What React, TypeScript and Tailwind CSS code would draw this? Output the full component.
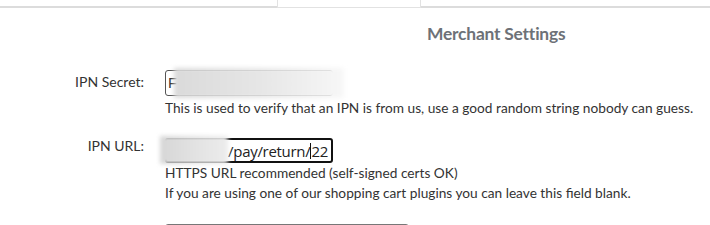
import React from "react";

export default function App() {
  return (
    <div className="w-[710px] h-[225px] overflow-hidden bg-white text-[#333] [font-family:Lato,'Noto_Sans',sans-serif]">
      <div className="flex h-[8px]">
        <div className="w-[277px] border-b-2 border-[#dcdcdc]" />
        <div className="w-[144px] border-l border-r border-b border-[#e2e2e2]" />
        <div className="flex-1 border-b-2 border-[#dcdcdc]" />
      </div>
      <div className="pl-[427px] pt-[16px] h-[62px]">
        <h2 className="text-[17.4px] font-bold text-[#6d7177] leading-[20px] tracking-[-0.2px]">Merchant Settings</h2>
      </div>
      <div className="grid grid-cols-[145px_1fr] gap-x-[20px] text-[13.7px] leading-[20px]">
        <div className="text-right pt-[2px] pr-[1px] text-[14px]">IPN Secret:</div>
        <div>
          <div className="relative w-[168px] h-[26px]">
            <div className="h-[26px] w-[168px] border border-[#555] rounded-[3px] pl-[2px] flex items-center text-[15px] [font-family:'Liberation_Sans',Arial,sans-serif]">F</div>
            <div className="absolute left-[9px] top-[-2px] w-[170px] h-[30px] bg-gradient-to-r from-[#dadada] via-[#e6e6e6] to-[#f7f7f7] blur-[2px]" />
          </div>
          <div className="mt-[2px]">This is used to verify that an IPN is from us, use a good random string nobody can guess.</div>
        </div>

        <div className="text-right pt-[18px] pr-[1px] text-[14px]">IPN URL:</div>
        <div className="pt-[20px]">
          <div className="relative w-[168px] h-[25px]">
            <div className="h-[25px] w-[168px] border-2 border-[#111] rounded-[3px] flex items-center justify-end pr-[3px] text-[15px] text-[#222] [font-family:'Open_Sans',sans-serif] tracking-[-0.3px]">
              <span>/pay/return/</span>
              <span className="inline-block w-[1px] h-[16px] bg-[#111]" />
              <span>22</span>
            </div>
            <div className="absolute left-[-5px] top-[-2px] w-[68px] h-[28px] bg-gradient-to-r from-[#d6d6d6] via-[#e2e2e2] to-[#ececec] blur-[2px]" />
          </div>
          <div>HTTPS URL recommended (self-signed certs OK)</div>
          <div>If you are using one of our shopping cart plugins you can leave this field blank.</div>
          <div className="mt-[21px] w-[244px] h-[20px] border border-[#777] rounded-[3px]" />
        </div>
      </div>
    </div>
  );
}
